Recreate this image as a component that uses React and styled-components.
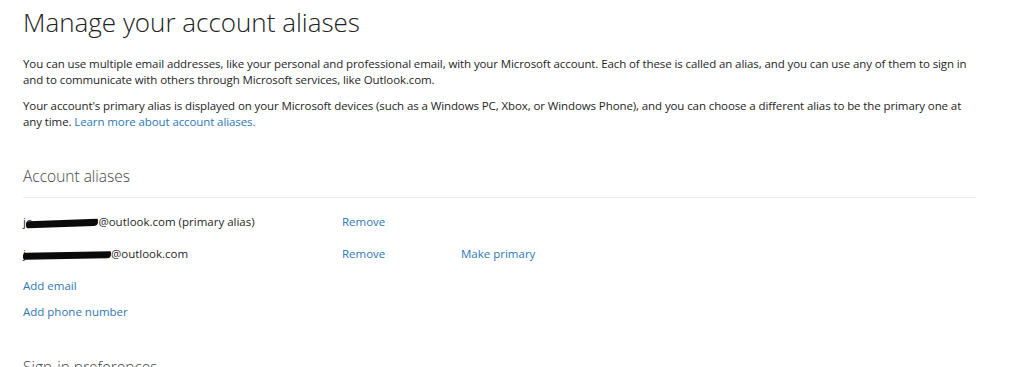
import React from "react";
import styled, { createGlobalStyle } from "styled-components";

const GlobalStyle = createGlobalStyle`
  html, body {
    margin: 0;
    padding: 0;
    background: #ffffff;
  }
  body {
    font-family: "Open Sans", "Liberation Sans", sans-serif;
    color: #1f1f1f;
  }
`;

const Page = styled.div`
  width: 953px;
  padding: 3px 0 0 23px;
  height: 364px;
  overflow: hidden;
`;

const Title = styled.h1`
  margin: 0 0 15px;
  font-size: 26px;
  font-weight: 300;
  color: #222;
  line-height: 38px;
`;

const Para = styled.p`
  margin: 0 0 10px;
  font-size: 11.5px;
  line-height: 16px;
  letter-spacing: -0.1px;
  color: #1e1e1e;
`;

const Link = styled.a`
  color: #2b78b4;
  text-decoration: none;
  cursor: pointer;
`;

const SectionTitle = styled.h2`
  margin: 34px 0 0;
  font-size: 15.5px;
  font-weight: 300;
  color: #444;
  line-height: 24px;
  padding-bottom: 9px;
  border-bottom: 1px solid #ececec;
`;

const AliasList = styled.div`
  display: flex;
  flex-direction: column;
  gap: 16px;
  padding-top: 16px;
`;

const AliasRow = styled.div`
  display: grid;
  grid-template-columns: 319px 119px auto;
  align-items: center;
  font-size: 11.5px;
  line-height: 16px;
`;

const Address = styled.span`
  display: flex;
  align-items: center;
  white-space: nowrap;
`;

const Redacted = styled.span`
  display: inline-block;
  width: ${(p) => p.$w}px;
  height: 7px;
  background: #0a0a0a;
  border-radius: 3px 1px 4px 2px;
  transform: rotate(${(p) => p.$tilt || 0}deg);
  margin: 2px 0 0 ${(p) => p.$ml || 0}px;
`;

const ActionLinks = styled.div`
  display: flex;
  flex-direction: column;
  gap: 10px;
  margin-top: 16px;
  font-size: 11.5px;
  line-height: 16px;
`;

const NextSection = styled(SectionTitle)`
  margin-top: 35px;
  border-bottom: none;
`;

export default function App() {
  return (
    <>
      <GlobalStyle />
      <Page>
        <Title>Manage your account aliases</Title>
        <Para>
          You can use multiple email addresses, like your personal and professional email, with your Microsoft
          account. Each of these is called an alias, and you can use any of them to sign in and to communicate with
          others through Microsoft services, like Outlook.com.
        </Para>
        <Para>
          Your account's primary alias is displayed on your Microsoft devices (such as a Windows PC, Xbox, or Windows
          Phone), and you can choose a different alias to be the primary one at any time.{" "}
          <Link>Learn more about account aliases.</Link>
        </Para>

        <SectionTitle>Account aliases</SectionTitle>
        <AliasList>
          <AliasRow>
            <Address>
              je
              <Redacted $w={72} $tilt={-2} $ml={-6} />
              @outlook.com (primary alias)
            </Address>
            <Link>Remove</Link>
            <span />
          </AliasRow>
          <AliasRow>
            <Address>
              j
              <Redacted $w={88} $tilt={-1} $ml={-3} />
              @outlook.com
            </Address>
            <Link>Remove</Link>
            <Link>Make primary</Link>
          </AliasRow>
        </AliasList>
        <ActionLinks>
          <Link>Add email</Link>
          <Link>Add phone number</Link>
        </ActionLinks>
        <NextSection>Sign-in preferences</NextSection>
      </Page>
    </>
  );
}
